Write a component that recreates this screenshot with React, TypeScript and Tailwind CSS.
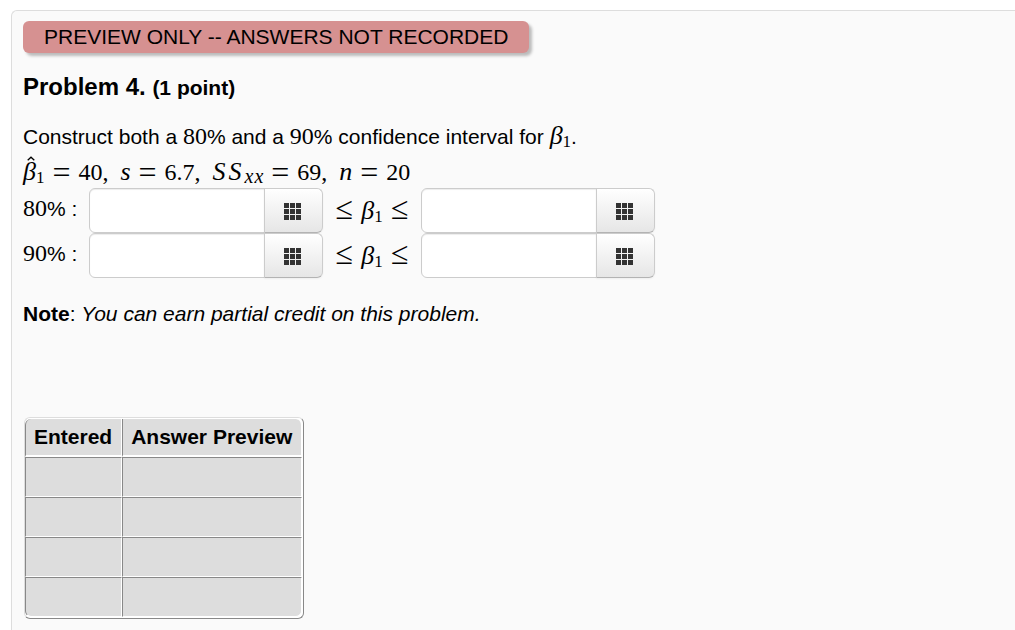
import type { ReactNode } from "react";

const intervals = ["80", "90"];
const answerRows = [1, 2, 3, 4];

const Num = ({ children }: { children: ReactNode }) => (
  <span className="font-['Liberation_Serif',serif] text-[24px]">{children}</span>
);

const Var = ({ children }: { children: ReactNode }) => (
  <span className="font-['Liberation_Serif',serif] text-[26px] leading-6 italic">{children}</span>
);

// relation sign (=, ≤) with the usual thick math space on both sides
const Rel = ({ children }: { children: ReactNode }) => (
  <span className="mx-2 inline-block w-[18px] text-center font-['Liberation_Serif',serif] text-[32px] leading-6">
    {children}
  </span>
);

// the large equals sign is lowered onto the math axis
const Eq = () => (
  <span className="relative top-[3px]">
    <Rel>=</Rel>
  </span>
);

const Beta = ({ hat = false }: { hat?: boolean }) => (
  <span className="relative inline-block leading-6">
    {hat && (
      <svg className="absolute -top-1 left-1 h-[5px] w-2" viewBox="0 0 8 5" fill="none" stroke="black" strokeWidth="1.3">
        <path d="M.7 4.2 4 1.2l3.3 3" />
      </svg>
    )}
    <Var>β</Var>
    <span className="relative top-[3px] font-['Liberation_Serif',serif] text-[17px]">1</span>
  </span>
);

const KeypadIcon = () => (
  <svg className="h-[17px] w-[17px]" viewBox="0 0 17 17" fill="#333">
    {[0, 6, 12].map((y) =>
      [0, 6, 12].map((x) => <rect key={`${x}-${y}`} x={x} y={y} width="5" height="5" />)
    )}
  </svg>
);

const AnswerInput = ({ label }: { label: string }) => (
  <div className="flex h-[45px] w-[234px]">
    <input
      type="text"
      aria-label={label}
      className="min-w-0 flex-1 rounded-l-md border border-[#ccc] bg-white px-2 text-[21px] shadow-[inset_0_1px_1px_rgba(0,0,0,0.075)]"
    />
    <button
      type="button"
      aria-label={`Open equation editor, ${label}`}
      className="-ml-px flex w-[59px] items-center justify-center rounded-r-md border border-[#ccc] border-b-[#b3b3b3] bg-linear-to-b from-white to-[#e6e6e6] pt-px pr-0.5 shadow-[0_1px_2px_rgba(0,0,0,0.05)]"
    >
      <KeypadIcon />
    </button>
  </div>
);

const App = () => {
  return (
    <div className="min-h-screen bg-white pt-2.5 pl-[11px] font-['Liberation_Sans',Arial,sans-serif] text-[21px] leading-8 text-black">
      <main className="rounded-tl-md border-t border-l border-[#ddd] bg-[#fafafa] pt-2.5 pb-3 pl-[11px]">
        <div className="w-fit rounded-md bg-[#d69191] px-[21px] shadow-[3px_3px_3px_#bbb]">
          PREVIEW ONLY -- ANSWERS NOT RECORDED
        </div>

        <h1 className="mt-[18px] text-[24px] font-bold">
          Problem 4. <span className="text-[21px]">(1 point)</span>
        </h1>

        <p className="mt-4 h-9">
          Construct both a <Num>80</Num>% and a <Num>90</Num>% confidence interval for <Beta />.
        </p>

        <p className="flex h-8 items-baseline">
          <Beta hat />
          <Eq />
          <Num>40,</Num>
          <span className="ml-3">
            <Var>s</Var>
          </span>
          <Eq />
          <Num>6.7,</Num>
          <span className="ml-3 flex items-baseline gap-[3px]">
            <Var>S</Var>
            <Var>S</Var>
            <span className="relative top-[3px] flex gap-px font-['Liberation_Serif',serif] text-[20px] leading-6 italic">
              <span>x</span>
              <span>x</span>
            </span>
          </span>
          <Eq />
          <Num>69,</Num>
          <span className="ml-3">
            <Var>n</Var>
          </span>
          <Eq />
          <Num>20</Num>
        </p>

        {intervals.map((level) => (
          <div key={level} className="flex items-start">
            <span className="w-[66px] leading-10">
              <Num>{level}</Num>% :
            </span>
            <AnswerInput label={`${level}% lower bound`} />
            <span className="flex w-[98px] items-baseline justify-center self-center">
              <Rel>≤</Rel>
              <Beta />
              <Rel>≤</Rel>
            </span>
            <AnswerInput label={`${level}% upper bound`} />
          </div>
        ))}

        <p className="mt-5">
          <b>Note</b>: <i>You can earn partial credit on this problem.</i>
        </p>

        <table className="mt-[87px] ml-px border-separate border-spacing-0 rounded-md border border-t-[#ddd] border-r-[#888] border-b-[#888] border-l-[#ddd] bg-white pt-px pr-px pb-px">
          <thead>
            <tr className="h-[38px]">
              <th className="rounded-tl-md border-r border-b-2 border-l border-r-white border-b-white border-l-[#888] bg-[#ddd] pr-[9px] pl-2">
                Entered
              </th>
              <th className="rounded-tr-md border-r border-b-2 border-l border-r-white border-b-white border-l-[#888] bg-[#ddd] pr-[9px] pl-2">
                Answer Preview
              </th>
            </tr>
          </thead>
          <tbody>
            {answerRows.map((row) => (
              <tr key={row} className="group h-10">
                <td className="border border-t-[#888] border-r-white border-b-white border-l-[#888] bg-[#ddd] group-last:rounded-bl-md" />
                <td className="border border-t-[#888] border-r-white border-b-white border-l-[#888] bg-[#ddd] group-last:rounded-br-md" />
              </tr>
            ))}
          </tbody>
        </table>
      </main>
    </div>
  );
};

export default App;
